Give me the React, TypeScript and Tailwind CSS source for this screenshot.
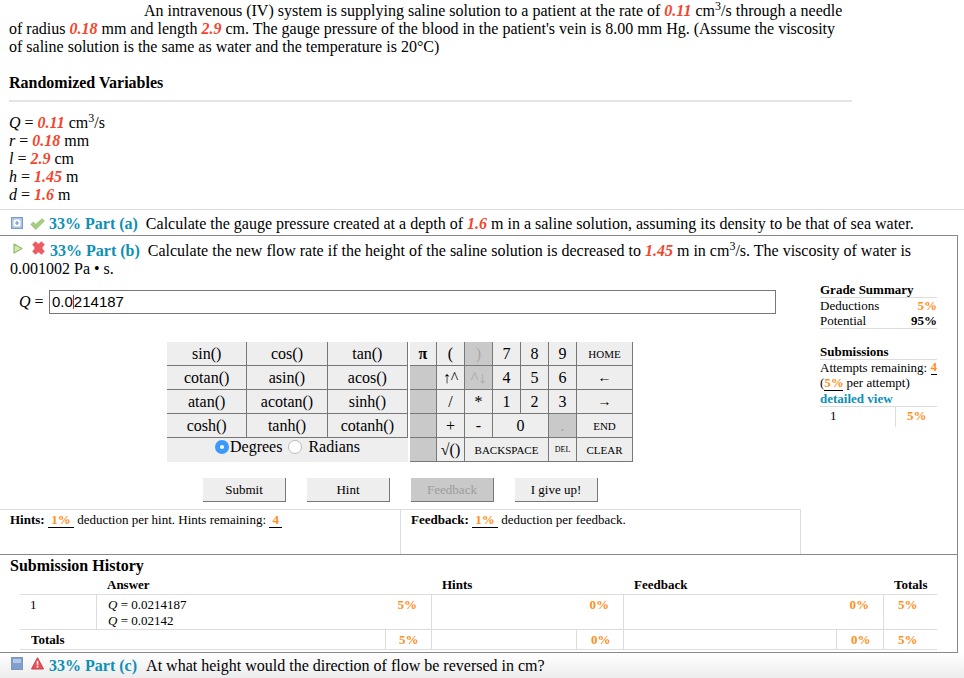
import React from 'react';

const serif = { fontFamily: '"Liberation Serif", serif' };

const Val = ({ children }: { children: React.ReactNode }) => (
  <span className="font-bold italic text-[#f4452c]">{children}</span>
);

const Pct = ({ children, className = '' }: { children: React.ReactNode; className?: string }) => (
  <span className={`font-bold text-[#ff8f1c] ${className}`}>{children}</span>
);

const Blank = ({ children, className = '' }: { children: React.ReactNode; className?: string }) => (
  <span className={`inline-block border-b border-black text-center font-bold leading-[14px] text-[#ff8f1c] ${className}`}>
    {children}
  </span>
);

const PartLabel = ({ children }: { children: React.ReactNode }) => (
  <span className="font-bold text-[#0e8fb5]">{children}</span>
);

const PlusIcon = () => (
  <svg width="12" height="12" viewBox="0 0 12 12" className="shrink-0">
    <rect x="0.5" y="0.5" width="11" height="11" fill="#a9c4e4" stroke="#7f9cc0" />
    <rect x="2.5" y="2.5" width="7" height="7" rx="1.5" fill="#fff" />
    <path d="M6 4v4M4 6h4" stroke="#6f93c4" strokeWidth="1.2" />
  </svg>
);

const MinusIcon = () => (
  <svg width="12" height="13" viewBox="0 0 12 13" className="shrink-0">
    <rect x="0.5" y="0.5" width="11" height="12" fill="#7f9fcc" stroke="#7f97b8" />
    <rect x="2" y="2" width="8" height="4" fill="#b4c8e6" />
  </svg>
);

const CheckIcon = () => (
  <svg width="15" height="12" viewBox="0 0 15 12" className="mt-[1px] shrink-0">
    <path d="M0.8 6.5l2.5-2.4 2.5 2.3L12 0.8l2.4 2.2L5.8 11.4z" fill="#a4cf7c" stroke="#8fb36c" strokeWidth="0.7" />
  </svg>
);

const CrossIcon = () => (
  <svg width="13" height="14" viewBox="0 0 13 14" className="shrink-0">
    <path d="M3.5 0.5L6.5 3l3-2.5 3 3L10 7l2.5 3.5-3 3L6.5 11l-3 2.5-3-3L3 7 0.5 3.5z" fill="#ef5a63" stroke="#e2737a" strokeWidth="0.5" />
  </svg>
);

const PlayIcon = () => (
  <svg width="10" height="11" viewBox="0 0 10 11" className="mt-[2px] shrink-0">
    <path d="M1 1l8 4.5L1 10z" fill="#d4e8b0" stroke="#94bb68" strokeWidth="1.2" strokeLinejoin="round" />
  </svg>
);

const WarnIcon = () => (
  <svg width="13" height="13" viewBox="0 0 13 13" className="shrink-0">
    <path d="M6.5 0.7L12.5 12H0.5z" fill="#e8505b" stroke="#c93c48" strokeLinejoin="round" />
    <path d="M6.5 3.8v4.4" stroke="#fff" strokeWidth="1.5" />
    <rect x="5.7" y="9" width="1.6" height="1.6" fill="#fff" />
  </svg>
);

const funcs = [
  'sin()', 'cos()', 'tan()',
  'cotan()', 'asin()', 'acos()',
  'atan()', 'acotan()', 'sinh()',
  'cosh()', 'tanh()', 'cotanh()',
];

type Key = { label?: string; span?: number; off?: boolean; small?: boolean; tiny?: boolean; arrow?: boolean; bold?: boolean };

const keys: Key[] = [
  { label: 'π', bold: true }, { label: '(' }, { label: ')', off: true }, { label: '7' }, { label: '8' }, { label: '9' }, { label: 'HOME', small: true },
  { off: true }, { label: '↑^' }, { label: '^↓', off: true }, { label: '4' }, { label: '5' }, { label: '6' }, { label: '←', arrow: true },
  { off: true }, { label: '/' }, { label: '*' }, { label: '1' }, { label: '2' }, { label: '3' }, { label: '→', arrow: true },
  { off: true }, { label: '+' }, { label: '-' }, { label: '0', span: 2 }, { label: '.', off: true }, { label: 'END', small: true },
  { off: true }, { label: '√()' }, { label: 'BACKSPACE', span: 3, small: true }, { label: 'DEL', tiny: true }, { label: 'CLEAR', small: true },
];

const spanClass = (span?: number) => {
  if (span === 2) return 'col-span-2';
  if (span === 3) return 'col-span-3';
  return '';
};

const ActionButton = ({ label, off }: { label: string; off?: boolean }) => (
  <button
    className={`h-[24px] w-[83px] border-r border-b border-[#777] text-[13px] ${
      off ? 'bg-[#c9c9c9] text-[#9c9c9c]' : 'bg-[#eeeeee] text-black'
    }`}
  >
    {label}
  </button>
);

const Sup3 = () => <sup className="text-[12px] leading-none">3</sup>;

export default function App() {
  return (
    <div className="h-[678px] w-[964px] overflow-hidden bg-white text-[16px] leading-[18px] text-black" style={serif}>
      {/* Question */}
      <div className="w-[850px] pl-[9px] pt-[2px]">
        <p className="indent-[135px]">
          An intravenous (IV) system is supplying saline solution to a patient at the rate of <Val>0.11</Val> cm<Sup3 />/s through a needle
          of radius <Val>0.18</Val> mm and length <Val>2.9</Val> cm. The gauge pressure of the blood in the patient's vein is 8.00 mm Hg. (Assume the viscosity
          of saline solution is the same as water and the temperature is 20°C)
        </p>
        <h3 className="mt-[18px] font-bold">Randomized Variables</h3>
      </div>
      <div className="ml-[9px] mt-[8px] h-[2px] w-[843px] bg-[#e4e4e4]" />
      <div className="pl-[9px] pt-[12px]">
        <div className="h-[18px]"><i>Q</i> = <Val>0.11</Val> cm<Sup3 />/s</div>
        <div className="h-[18px]"><i>r</i> = <Val>0.18</Val> mm</div>
        <div className="h-[18px]"><i>l</i> = <Val>2.9</Val> cm</div>
        <div className="h-[18px]"><i>h</i> = <Val>1.45</Val> m</div>
        <div className="h-[18px]"><i>d</i> = <Val>1.6</Val> m</div>
      </div>

      {/* Part a */}
      <div className="mt-[5px] flex h-[26px] items-start border-t border-[#dddddd] pl-[11px] pt-[7px]">
        <PlusIcon />
        <span className="ml-[7px]"><CheckIcon /></span>
        <div className="-mt-[2px] ml-[4px] whitespace-nowrap">
          <PartLabel>33% Part (a)</PartLabel>&nbsp; Calculate the gauge pressure created at a depth of <Val>1.6</Val> m in a saline solution, assuming its density to be that of sea water.
        </div>
      </div>

      {/* Part b */}
      <div className="h-[418px] w-[958px] border-t border-r border-b border-[#888888]">
        <div className="relative pl-[10px] pr-[40px] pt-[6px]">
          <div className="indent-[40px]">
            <PartLabel>33% Part (b)</PartLabel>&nbsp; Calculate the new flow rate if the height of the saline solution is decreased to <Val>1.45</Val> m in cm<Sup3 />/s. The viscosity of water is 0.001002 Pa • s.
          </div>
          <div className="absolute left-[13px] top-[5px] flex items-start gap-[9px]">
            <PlayIcon />
            <CrossIcon />
          </div>
        </div>

        <div className="flex">
          <div className="w-[800px]">
            {/* Answer input */}
            <div className="flex items-center pl-[19px] pt-[12px]">
              <span className="w-[30px] whitespace-nowrap"><i>Q</i> =</span>
              <div
                className="flex h-[24px] w-[727px] items-center border border-[#777] pl-[2px] text-[15px]"
                style={{ fontFamily: '"Liberation Sans", sans-serif' }}
              >
                0.0<span className="h-[14px] w-px bg-[#e02020]" />214187
              </div>
            </div>

            {/* Keypad */}
            <div className="ml-[167px] mt-[28px] flex gap-[2px] text-[16px]">
              <div>
                <div className="grid w-[241px] grid-cols-3">
                  {funcs.map((f) => (
                    <div key={f} className="flex h-[24px] items-center justify-center border-r border-b border-[#777] bg-[#eeeeee]">
                      {f}
                    </div>
                  ))}
                </div>
                <div className="flex h-[24px] w-[241px] items-center justify-center gap-[1px] bg-[#eeeeee] pb-[6px]">
                  <span className="flex h-[14px] w-[14px] items-center justify-center rounded-full bg-[#3b99fc]">
                    <span className="h-[4px] w-[4px] rounded-full bg-white" />
                  </span>
                  Degrees
                  <span className="mx-[5px] h-[14px] w-[14px] rounded-full border border-[#bbbbbb] bg-white" />
                  Radians
                </div>
              </div>
              <div className="grid w-[223px] grid-cols-[27px_28px_28px_28px_28px_28px_56px]">
                {keys.map((k, i) => (
                  <div
                    key={i}
                    className={`flex h-[24px] items-center justify-center whitespace-nowrap border-r border-b border-[#777] ${spanClass(k.span)} ${
                      k.off ? 'bg-[#c9c9c9] text-[#a8a8a8]' : 'bg-[#eeeeee]'
                    } ${k.small ? 'text-[11px]' : ''} ${k.tiny ? 'text-[8px]' : ''} ${k.arrow ? 'text-[14px] font-bold' : ''} ${k.bold ? 'font-bold' : ''}`}
                  >
                    {k.label}
                  </div>
                ))}
              </div>
            </div>

            {/* Actions */}
            <div className="ml-[203px] mt-[16px] flex gap-[21px]">
              <ActionButton label="Submit" />
              <ActionButton label="Hint" />
              <ActionButton label="Feedback" off />
              <ActionButton label="I give up!" />
            </div>
          </div>

          {/* Grade summary */}
          <div className="ml-[20px] w-[117px] pt-[4px] text-[13px] leading-[15px]">
            <div className="border-b border-[#dddddd] font-bold">Grade Summary</div>
            <div className="flex justify-between"><span>Deductions</span><Pct>5%</Pct></div>
            <div className="flex justify-between border-b border-[#dddddd]"><span>Potential</span><b>95%</b></div>
            <div className="mt-[15px] border-b border-[#dddddd] font-bold">Submissions</div>
            <div className="flex justify-between whitespace-nowrap"><span>Attempts remaining:</span><Blank>4</Blank></div>
            <div>(<Blank className="w-[19px]">5%</Blank> per attempt)</div>
            <div className="border-b border-[#dddddd] font-bold text-[#0e8fb5]">detailed view</div>
            <div className="flex h-[20px]">
              <span className="w-[76px] border-r border-[#dddddd] pl-[10px] pt-[1px]">1</span>
              <Pct className="pl-[11px] pt-[1px]">5%</Pct>
            </div>
          </div>
        </div>

        {/* Hints and feedback */}
        <div className="mt-[7px] flex h-[46px] border-b border-[#888888] text-[13px] leading-[15px]">
          <div className="h-full w-[401px] border-t border-r border-[#dddddd] pl-[10px] pt-[2px]">
            <b>Hints:</b> <Blank className="w-[26px]">1%</Blank> deduction per hint. Hints remaining: <Blank className="w-[13px]">4</Blank>
          </div>
          <div className="h-full w-[400px] border-t border-r border-[#dddddd] pl-[10px] pt-[2px]">
            <b>Feedback:</b> <Blank className="w-[26px]">1%</Blank> deduction per feedback.
          </div>
        </div>

        {/* Submission history */}
        <div className="pl-[10px] pt-[2px] font-bold">Submission History</div>
        <div className="ml-[20px] w-[917px] text-[13px] leading-[15px]">
          <div className="flex h-[20px] border-b border-[#dddddd] pt-[2px] font-bold">
            <span className="w-[87px]" />
            <span className="w-[335px]">Answer</span>
            <span className="w-[192px]">Hints</span>
            <span className="w-[260px]">Feedback</span>
            <span>Totals</span>
          </div>
          <div className="flex h-[35px] border-b border-[#dddddd]">
            <span className="w-[77px] border-r border-[#dddddd] pl-[10px] pt-[2px]">1</span>
            <div className="flex w-[335px] justify-between border-r border-[#dddddd] pl-[11px] pr-[14px] pt-[2px]">
              <div className="leading-[16px]">
                <div><i>Q</i> = 0.0214187</div>
                <div><i>Q</i> = 0.02142</div>
              </div>
              <Pct>5%</Pct>
            </div>
            <div className="w-[192px] border-r border-[#dddddd] pr-[14px] pt-[2px] text-right"><Pct>0%</Pct></div>
            <div className="w-[260px] border-r border-[#dddddd] pr-[14px] pt-[2px] text-right"><Pct>0%</Pct></div>
            <div className="pl-[14px] pt-[2px]"><Pct>5%</Pct></div>
          </div>
          <div className="flex h-[20px] border-b border-[#dddddd]">
            <b className="w-[366px] border-r border-[#dddddd] pl-[11px] pt-[2px]">Totals</b>
            <div className="w-[46px] border-r border-[#dddddd] pl-[13px] pt-[2px]"><Pct>5%</Pct></div>
            <div className="w-[145px] border-r border-[#dddddd]" />
            <div className="w-[47px] border-r border-[#dddddd] pl-[14px] pt-[2px]"><Pct>0%</Pct></div>
            <div className="w-[213px] border-r border-[#dddddd]" />
            <div className="w-[47px] border-r border-[#dddddd] pl-[14px] pt-[2px]"><Pct>0%</Pct></div>
            <div className="pl-[14px] pt-[2px]"><Pct>5%</Pct></div>
          </div>
        </div>
      </div>

      {/* Part c */}
      <div className="flex h-[25px] items-start bg-gradient-to-b from-white to-[#ececec] pl-[11px] pt-[4px]">
        <MinusIcon />
        <span className="ml-[8px]"><WarnIcon /></span>
        <div className="ml-[5px] whitespace-nowrap">
          <PartLabel>33% Part (c)</PartLabel>&nbsp;<span className="ml-[2px]"> At what height would the direction of flow be reversed in cm?</span>
        </div>
      </div>
    </div>
  );
}
